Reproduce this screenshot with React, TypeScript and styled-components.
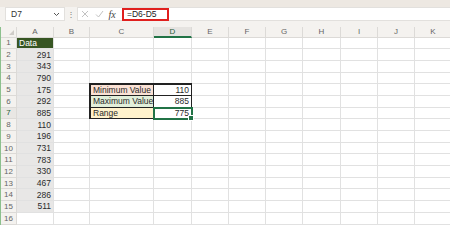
import React from "react";
import styled, { createGlobalStyle } from "styled-components";

const GlobalStyle = createGlobalStyle`
  html, body {
    margin: 0;
    padding: 0;
    background: #f4f2ef;
    overflow: hidden;
  }
  body {
    font-family: "Liberation Sans", Arial, sans-serif;
  }
`;

const columns = [
  { name: "A", width: 37 },
  { name: "B", width: 36 },
  { name: "C", width: 64 },
  { name: "D", width: 38 },
  { name: "E", width: 37 },
  { name: "F", width: 37 },
  { name: "G", width: 37 },
  { name: "H", width: 38 },
  { name: "I", width: 37 },
  { name: "J", width: 37 },
  { name: "K", width: 37 },
];

const data = [291, 343, 790, 175, 292, 885, 110, 196, 731, 783, 330, 467, 286, 511];

const summary: Record<number, { label: string; value: number; fill: string }> = {
  5: { label: "Minimum Value", value: 110, fill: "#fbe2d5" },
  6: { label: "Maximum Value", value: 885, fill: "#e2efda" },
  7: { label: "Range", value: 775, fill: "#fff2cc" },
};

const Page = styled.div`
  width: 450px;
  height: 225px;
  display: flex;
  flex-direction: column;
  overflow: hidden;
`;

const TopStrip = styled.div`
  height: 7px;
  background: #ede8e2;
  flex-shrink: 0;
`;

const FormulaBar = styled.div`
  height: 14px;
  display: flex;
  align-items: stretch;
  padding-left: 5px;
  margin-bottom: 6px;
  flex-shrink: 0;
`;

const NameBox = styled.div`
  width: 60px;
  box-sizing: border-box;
  background: #fff;
  border: 1px solid #e2e0dd;
  display: flex;
  align-items: center;
  justify-content: space-between;
  padding: 0 4px 0 5px;
  font-size: 8.5px;
  color: #333;
`;

const Dots = styled.div`
  width: 12px;
  display: flex;
  align-items: center;
  justify-content: center;
  color: #777;
  font-size: 8px;
`;

const FormulaBox = styled.div`
  flex: 1;
  background: #fff;
  border-top: 1px solid #e2e0dd;
  border-bottom: 1px solid #e2e0dd;
  border-left: 1px solid #e2e0dd;
  display: flex;
  align-items: center;
`;

const IconSlot = styled.div<{ $w: number }>`
  width: ${(p) => p.$w}px;
  display: flex;
  align-items: center;
  justify-content: center;
`;

const Fx = styled.span`
  font-family: "Liberation Serif", serif;
  font-style: italic;
  font-size: 10px;
  color: #444;
`;

const FormulaText = styled.span`
  margin-left: 4px;
  border: 2px solid #e0201e;
  height: 13px;
  box-sizing: border-box;
  display: flex;
  align-items: center;
  padding: 0 10px 0 3px;
  font-size: 8.5px;
  color: #222;
`;

const Sheet = styled.div`
  flex: 1;
  display: grid;
  grid-template-columns: 16px ${columns.map((c) => c.width + "px").join(" ")};
  grid-template-rows: 10.5px;
  grid-auto-rows: 11.7px;
  background: #fff;
  border-left: 1px solid #8cc08d;
  font-size: 8.5px;
`;

const Corner = styled.div`
  background: #f4f2ef;
  border-right: 1px solid #dcdad7;
  border-bottom: 1px solid #dcdad7;
  position: relative;
  &:after {
    content: "";
    position: absolute;
    right: 2px;
    bottom: 2px;
    border-left: 5px solid transparent;
    border-bottom: 5px solid #cfccc8;
  }
`;

const ColHeader = styled.div<{ $active?: boolean }>`
  background: ${(p) => (p.$active ? "#e5e3e0" : "#f4f2ef")};
  border-right: 1px solid #dcdad7;
  border-bottom: ${(p) => (p.$active ? "2px solid #217346" : "1px solid #dcdad7")};
  color: ${(p) => (p.$active ? "#1e5c38" : "#666")};
  display: flex;
  align-items: center;
  justify-content: center;
  font-size: 8px;
  box-sizing: border-box;
`;

const RowHeader = styled.div<{ $active?: boolean }>`
  background: ${(p) => (p.$active ? "#e9e7e4" : "#f4f2ef")};
  border-bottom: 1px solid #dcdad7;
  border-right: 1px solid #dcdad7;
  color: ${(p) => (p.$active ? "#1e5c38" : "#666")};
  display: flex;
  align-items: center;
  justify-content: center;
  font-size: 8px;
  box-sizing: border-box;
`;

const Cell = styled.div<{
  $fill?: string;
  $align?: "left" | "right";
  $color?: string;
  $box?: boolean;
  $selected?: boolean;
}>`
  position: relative;
  box-sizing: border-box;
  background: ${(p) => p.$fill || "#fff"};
  border-right: 1px solid ${(p) => (p.$box ? "#222" : "#e1e1e1")};
  border-bottom: 1px solid ${(p) => (p.$box ? "#222" : "#e1e1e1")};
  color: ${(p) => p.$color || "#2a2a2a"};
  display: flex;
  align-items: center;
  justify-content: ${(p) => (p.$align === "right" ? "flex-end" : "flex-start")};
  padding: 0 2px;
  white-space: nowrap;
  overflow: visible;
  ${(p) =>
    p.$selected &&
    `
    outline: 2px solid #217346;
    outline-offset: -1px;
    z-index: 2;
    &:after {
      content: "";
      position: absolute;
      right: -3px;
      bottom: -3px;
      width: 4px;
      height: 4px;
      background: #217346;
      border: 1px solid #fff;
    }
  `}
`;

const BoxLeft = styled(Cell)`
  border-left: 2px solid #222;
  margin-left: -1px;
`;

function renderRow(row: number) {
  const cells: React.ReactNode[] = [];
  const isSummary = summary[row];
  columns.forEach((col) => {
    const key = `${col.name}${row}`;
    if (col.name === "A") {
      if (row === 1) {
        cells.push(
          <Cell key={key} $fill="#375623" $color="#fff">
            Data
          </Cell>
        );
      } else if (row <= 15) {
        cells.push(
          <Cell key={key} $fill="#e8e7e6" $align="right">
            {data[row - 2]}
          </Cell>
        );
      } else {
        cells.push(<Cell key={key} />);
      }
      return;
    }
    if (isSummary && col.name === "C") {
      cells.push(
        <BoxLeft
          key={key}
          $box
          $fill={isSummary.fill}
          style={row === 5 ? { borderTop: "2px solid #222", marginTop: -1 } : undefined}
        >
          {isSummary.label}
        </BoxLeft>
      );
      return;
    }
    if (isSummary && col.name === "D") {
      cells.push(
        <Cell
          key={key}
          $box
          $align="right"
          $selected={row === 7}
          style={row === 5 ? { borderTop: "2px solid #222", marginTop: -1 } : undefined}
        >
          {isSummary.value}
        </Cell>
      );
      return;
    }
    if (row === 4 && (col.name === "C" || col.name === "D")) {
      cells.push(<Cell key={key} style={{ borderBottomColor: "#222" }} />);
      return;
    }
    if (isSummary && col.name === "B") {
      cells.push(<Cell key={key} style={{ borderRightColor: "#222" }} />);
      return;
    }
    cells.push(<Cell key={key} />);
  });
  return cells;
}

const Chevron = () => (
  <svg width="7" height="5" viewBox="0 0 7 5">
    <path d="M1 1l2.5 2.5L6 1" fill="none" stroke="#555" strokeWidth="1" />
  </svg>
);

const CrossIcon = () => (
  <svg width="8" height="8" viewBox="0 0 8 8">
    <path d="M1 1l6 6M7 1L1 7" stroke="#bbb" strokeWidth="0.9" />
  </svg>
);

const CheckIcon = () => (
  <svg width="9" height="8" viewBox="0 0 9 8">
    <path d="M1 4.5l2.5 2.5L8 1" fill="none" stroke="#bbb" strokeWidth="0.9" />
  </svg>
);

export default function App() {
  const rows = Array.from({ length: 16 }, (_, i) => i + 1);
  return (
    <Page>
      <GlobalStyle />
      <TopStrip />
      <FormulaBar>
        <NameBox>
          <span>D7</span>
          <Chevron />
        </NameBox>
        <Dots>⋮</Dots>
        <FormulaBox>
          <IconSlot $w={14}>
            <CrossIcon />
          </IconSlot>
          <IconSlot $w={14}>
            <CheckIcon />
          </IconSlot>
          <IconSlot $w={12}>
            <Fx>fx</Fx>
          </IconSlot>
          <FormulaText>=D6-D5</FormulaText>
        </FormulaBox>
      </FormulaBar>
      <Sheet>
        <Corner />
        {columns.map((c) => (
          <ColHeader key={c.name} $active={c.name === "D"}>
            {c.name}
          </ColHeader>
        ))}
        {rows.map((r) => (
          <React.Fragment key={r}>
            <RowHeader $active={r === 7}>{r}</RowHeader>
            {renderRow(r)}
          </React.Fragment>
        ))}
      </Sheet>
    </Page>
  );
}
